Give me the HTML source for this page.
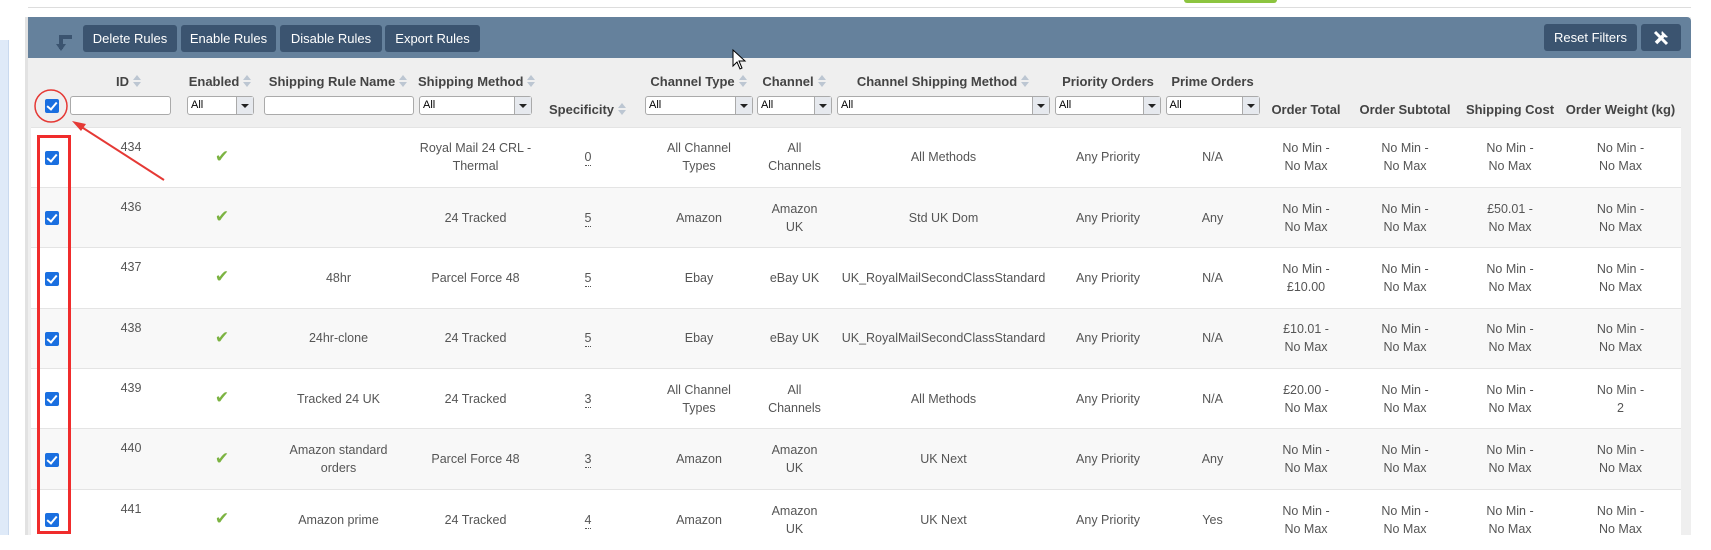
<!DOCTYPE html>
<html><head><meta charset="utf-8"><style>
*{box-sizing:border-box;margin:0;padding:0}
body{width:1711px;height:535px;overflow:hidden;background:#fff;font-family:"Liberation Sans",Arial,sans-serif;position:relative;color:#555}
.abs{position:absolute}
.leftstrip{left:0;top:40px;width:9px;height:495px;background:#dfeaf8;border-right:1px solid #c9d9ee}
.topline{left:28px;top:7px;width:1663px;height:1px;background:#ddd}
.green{left:1184px;top:0;width:93px;height:3px;background:#8cc43f;border-radius:0 0 3px 3px}
.panel{left:25px;top:17px;width:1666px;height:518px;background:#efefef;border-left:3px solid #e2e2e2}
.toolbar{left:28px;top:17px;width:1663px;height:41px;background:#65819c;border-radius:0 4px 0 0}
.btn{position:absolute;top:25px;height:27px;background:#3b5470;color:#fff;font-size:13px;line-height:27px;text-align:center;border-radius:3px}
table{position:absolute;left:31px;top:58px;border-collapse:collapse;table-layout:fixed;width:1650px}
td,th{text-align:center;font-size:12.5px;line-height:18px;padding:0;white-space:nowrap}
th{color:#444;font-weight:bold;font-size:13px}
tr.h1 th{height:35px;vertical-align:bottom;padding-bottom:2px}
tr.h2 th{height:34px;vertical-align:top;padding-top:3px}
tbody tr{height:60.4px;border-top:1px solid #e4e4e4}
tbody tr:nth-child(odd){background:#fff}
tbody tr:nth-child(even){background:#f8f8f8}
td.id{vertical-align:top;padding-top:10px;padding-left:8px}
.sort{display:inline-block;width:9px;height:13px;vertical-align:-2px;margin-left:4px;position:relative}
.sort:before{content:"";position:absolute;left:0;top:0;border-left:4.5px solid transparent;border-right:4.5px solid transparent;border-bottom:5px solid #bcc6d2}
.sort:after{content:"";position:absolute;left:0;top:7px;border-left:4.5px solid transparent;border-right:4.5px solid transparent;border-top:5px solid #bcc6d2}
.inp{display:block;height:19px;border:1px solid #aaa;border-radius:3px;background:#fff;margin:0 auto;position:relative;text-align:left;font-weight:normal;font-size:11px;color:#000;line-height:17px;padding-left:3px}
.inp.sel:after{content:"";position:absolute;right:0;top:0;width:16px;height:17px;background:#e6e9ee;border-left:1px solid #aaa}
.inp.sel:before{content:"";position:absolute;right:4px;top:7px;border-left:4px solid transparent;border-right:4px solid transparent;border-top:4px solid #222;z-index:2}
.cb{display:inline-block;width:14px;height:14px;background:#1a6fe0;border-radius:2px;position:relative;vertical-align:middle}
.cb:after{content:"";position:absolute;left:4px;top:1px;width:4px;height:8px;border:solid #fff;border-width:0 2px 2px 0;transform:rotate(40deg)}
.ok{color:#7cb342;font-size:17px;padding-left:3px}
.sp{border-bottom:1px dotted #555;line-height:15px;display:inline-block}
</style></head><body>
<div class="abs leftstrip"></div>
<div class="abs topline"></div>
<div class="abs green"></div>
<div class="abs panel"></div>
<div class="abs toolbar"></div>
<svg class="abs" style="left:54px;top:30px" width="20" height="22" viewBox="0 0 20 22"><path d="M7 19 V7 H18" stroke="#3b5470" stroke-width="4" fill="none"/><path d="M2 14 L7 21 L12 14 Z" fill="#3b5470"/></svg>
<div class="btn" style="left:83px;width:94px">Delete Rules</div>
<div class="btn" style="left:181px;width:95px">Enable Rules</div>
<div class="btn" style="left:280px;width:102px">Disable Rules</div>
<div class="btn" style="left:385px;width:95px">Export Rules</div>
<div class="btn" style="left:1544px;width:93px;top:24px">Reset Filters</div>
<div class="btn" style="left:1641px;width:40px;top:24px"><svg width="20" height="20" viewBox="0 0 20 20" style="margin-top:4px"><path d="M4 4 L16 16" stroke="#fff" stroke-width="3"/><path d="M5 15 L12 8" stroke="#fff" stroke-width="3.5"/><path d="M11 3 a4.5 4.5 0 0 0 6 6 L14 6z" fill="#fff"/></svg></div>

<table>
<colgroup><col style="width:41px"><col style="width:110px"><col style="width:77px"><col style="width:159px"><col style="width:115px"><col style="width:110px"><col style="width:112px"><col style="width:79px"><col style="width:219px"><col style="width:110px"><col style="width:99px"><col style="width:88px"><col style="width:110px"><col style="width:100px"><col style="width:121px"></colgroup>
<thead>
<tr class="h1"><th></th><th style="padding-left:4px">ID<span class="sort"></span></th><th>Enabled<span class="sort"></span></th><th>Shipping Rule Name<span class="sort"></span></th><th>Shipping Method<span class="sort"></span></th><th></th><th>Channel Type<span class="sort"></span></th><th>Channel<span class="sort"></span></th><th>Channel Shipping Method<span class="sort"></span></th><th>Priority Orders</th><th>Prime Orders</th><th></th><th></th><th></th><th></th></tr>
<tr class="h2"><th><span class="cb" style="margin-top:1px"></span></th><th><span class="inp" style="width:101px;margin-left:-2px"></span></th><th><span class="inp sel" style="width:67px">All</span></th><th><span class="inp" style="width:150px">&nbsp;</span></th><th><span class="inp sel" style="width:113px">All</span></th><th style="vertical-align:middle;padding:0">Specificity<span class="sort"></span></th><th><span class="inp sel" style="width:108px">All</span></th><th><span class="inp sel" style="width:75px">All</span></th><th><span class="inp sel" style="width:213px">All</span></th><th><span class="inp sel" style="width:106px">All</span></th><th><span class="inp sel" style="width:94px">All</span></th><th style="vertical-align:middle;padding:0">Order Total</th><th style="vertical-align:middle;padding:0">Order Subtotal</th><th style="vertical-align:middle;padding:0">Shipping Cost</th><th style="vertical-align:middle;padding:0">Order Weight (kg)</th></tr>
</thead>
<tbody>
<tr><td><span class="cb"></span></td><td class="id">434</td><td><span class="ok">✔</span></td><td></td><td>Royal Mail 24 CRL -<br>Thermal</td><td><span class="sp">0</span></td><td>All Channel<br>Types</td><td>All<br>Channels</td><td>All Methods</td><td>Any Priority</td><td>N/A</td><td>No Min -<br>No Max</td><td>No Min -<br>No Max</td><td>No Min -<br>No Max</td><td>No Min -<br>No Max</td></tr>
<tr><td><span class="cb"></span></td><td class="id">436</td><td><span class="ok">✔</span></td><td></td><td>24 Tracked</td><td><span class="sp">5</span></td><td>Amazon</td><td>Amazon<br>UK</td><td>Std UK Dom</td><td>Any Priority</td><td>Any</td><td>No Min -<br>No Max</td><td>No Min -<br>No Max</td><td>£50.01 -<br>No Max</td><td>No Min -<br>No Max</td></tr>
<tr><td><span class="cb"></span></td><td class="id">437</td><td><span class="ok">✔</span></td><td>48hr</td><td>Parcel Force 48</td><td><span class="sp">5</span></td><td>Ebay</td><td>eBay UK</td><td>UK_RoyalMailSecondClassStandard</td><td>Any Priority</td><td>N/A</td><td>No Min -<br>£10.00</td><td>No Min -<br>No Max</td><td>No Min -<br>No Max</td><td>No Min -<br>No Max</td></tr>
<tr><td><span class="cb"></span></td><td class="id">438</td><td><span class="ok">✔</span></td><td>24hr-clone</td><td>24 Tracked</td><td><span class="sp">5</span></td><td>Ebay</td><td>eBay UK</td><td>UK_RoyalMailSecondClassStandard</td><td>Any Priority</td><td>N/A</td><td>£10.01 -<br>No Max</td><td>No Min -<br>No Max</td><td>No Min -<br>No Max</td><td>No Min -<br>No Max</td></tr>
<tr><td><span class="cb"></span></td><td class="id">439</td><td><span class="ok">✔</span></td><td>Tracked 24 UK</td><td>24 Tracked</td><td><span class="sp">3</span></td><td>All Channel<br>Types</td><td>All<br>Channels</td><td>All Methods</td><td>Any Priority</td><td>N/A</td><td>£20.00 -<br>No Max</td><td>No Min -<br>No Max</td><td>No Min -<br>No Max</td><td>No Min -<br>2</td></tr>
<tr><td><span class="cb"></span></td><td class="id">440</td><td><span class="ok">✔</span></td><td>Amazon standard<br>orders</td><td>Parcel Force 48</td><td><span class="sp">3</span></td><td>Amazon</td><td>Amazon<br>UK</td><td>UK Next</td><td>Any Priority</td><td>Any</td><td>No Min -<br>No Max</td><td>No Min -<br>No Max</td><td>No Min -<br>No Max</td><td>No Min -<br>No Max</td></tr>
<tr><td><span class="cb"></span></td><td class="id">441</td><td><span class="ok">✔</span></td><td>Amazon prime</td><td>24 Tracked</td><td><span class="sp">4</span></td><td>Amazon</td><td>Amazon<br>UK</td><td>UK Next</td><td>Any Priority</td><td>Yes</td><td>No Min -<br>No Max</td><td>No Min -<br>No Max</td><td>No Min -<br>No Max</td><td>No Min -<br>No Max</td></tr>
</tbody>
</table>

<svg class="abs" style="left:0;top:0" width="1711" height="535">
<circle cx="51" cy="106" r="16" fill="none" stroke="#e53935" stroke-width="1.5"/>
<line x1="164" y1="180" x2="80" y2="126" stroke="#e53935" stroke-width="2"/>
<path d="M72 121 L86 124 L81 131 Z" fill="#e53935"/>
<rect x="38.5" y="136.5" width="31" height="396" fill="none" stroke="#f02c2c" stroke-width="3"/>
<path d="M733 50 L733 66 L737 62 L740 69 L742 68 L739 61 L745 61 Z" fill="#fff" stroke="#000" stroke-width="1"/>
</svg>
</body></html>
